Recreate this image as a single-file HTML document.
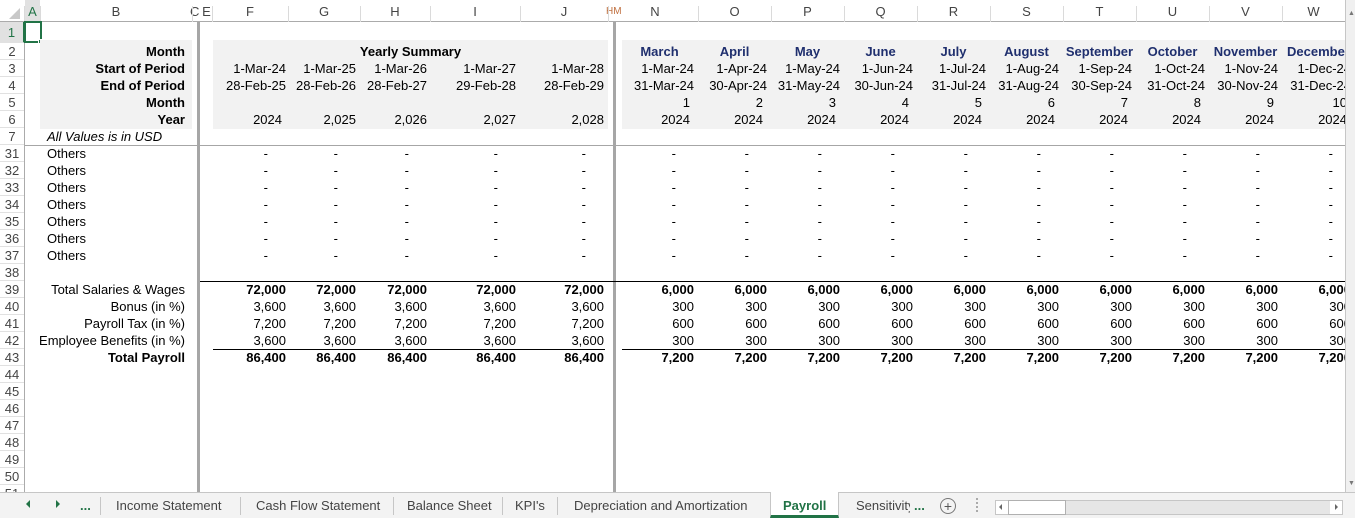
<!DOCTYPE html>
<html><head><meta charset="utf-8"><style>
*{margin:0;padding:0;box-sizing:border-box}
body{width:1355px;height:518px;overflow:hidden;background:#fff;font-family:"Liberation Sans",Arial,sans-serif;font-size:13px;color:#000;position:relative}
.a{position:absolute;white-space:nowrap}
.ch{position:absolute;top:0;height:22px;line-height:24px;color:#444;font-size:13px;text-align:center}
.cs{position:absolute;top:6px;width:1px;height:16px;background:#dadada}
.rh{position:absolute;left:0;width:24px;text-align:center;color:#444;height:17px;line-height:17px;border-bottom:1px solid #e1e1e1;font-size:13px}
.r{position:absolute;left:0;width:1345px;height:17px;line-height:17px;overflow:hidden}
.r span{position:absolute;top:0;white-space:nowrap;text-align:right}
.F{right:1059px}.G{right:989px}.H{right:918px}.I{right:829px}.J{right:741px}
.N{right:651px}.O{right:578px}.P{right:505px}.Q{right:432px}.R{right:359px}.S{right:286px}.T{right:213px}.U{right:140px}.V{right:67px}.W{right:-6px}
.d span{padding-right:18px}
.b{font-weight:bold}
.m{position:absolute;font-weight:bold;color:#1f2f6e;width:73px;text-align:center;top:43px;height:17px;line-height:17px}
.lab{position:absolute;left:0;width:185px;text-align:right;height:17px;line-height:17px;white-space:nowrap}
.tab{position:absolute;top:493px;height:25px;line-height:26px;color:#444;font-size:13px}
.sep{position:absolute;top:497px;width:1px;height:18px;background:#c6c6c6}
</style></head><body>
<div class="a" style="left:0;top:0;width:1347px;height:22px;background:#fff;border-bottom:1px solid #ababab"></div>
<div class="a" style="left:0;top:0;width:24px;height:22px;"><svg width="24" height="22"><polygon points="20,8 20,19 9,19" fill="#c8c8c8"/></svg></div>
<div class="ch" style="left:25px;width:15px;background:#e1e1e1;color:#217346;border-bottom:2px solid #217346;height:23px">A</div>
<div class="ch" style="left:40px;width:152px">B</div>
<div class="ch" style="left:190px;width:8px">C</div>
<div class="ch" style="left:201px;width:11px">E</div>
<div class="ch" style="left:212px;width:76px">F</div>
<div class="ch" style="left:288px;width:72px">G</div>
<div class="ch" style="left:360px;width:70px">H</div>
<div class="ch" style="left:430px;width:90px">I</div>
<div class="ch" style="left:520px;width:88px">J</div>
<div class="ch" style="left:606px;width:10px;font-size:10px;color:#c07040">HM</div>
<div class="ch" style="left:618px;width:74px">N</div>
<div class="ch" style="left:698px;width:73px">O</div>
<div class="ch" style="left:771px;width:73px">P</div>
<div class="ch" style="left:844px;width:73px">Q</div>
<div class="ch" style="left:917px;width:73px">R</div>
<div class="ch" style="left:990px;width:73px">S</div>
<div class="ch" style="left:1063px;width:73px">T</div>
<div class="ch" style="left:1136px;width:73px">U</div>
<div class="ch" style="left:1209px;width:73px">V</div>
<div class="ch" style="left:1282px;width:63px">W</div>
<div class="cs" style="left:24px"></div><div class="cs" style="left:40px"></div><div class="cs" style="left:192px"></div><div class="cs" style="left:212px"></div><div class="cs" style="left:288px"></div><div class="cs" style="left:360px"></div><div class="cs" style="left:430px"></div><div class="cs" style="left:520px"></div><div class="cs" style="left:608px"></div><div class="cs" style="left:698px"></div><div class="cs" style="left:771px"></div><div class="cs" style="left:844px"></div><div class="cs" style="left:917px"></div><div class="cs" style="left:990px"></div><div class="cs" style="left:1063px"></div><div class="cs" style="left:1136px"></div><div class="cs" style="left:1209px"></div><div class="cs" style="left:1282px"></div>
<div class="a" style="left:0;top:22px;width:25px;height:471px;border-right:1px solid #ababab"></div>
<div class="rh" style="top:22px;height:21px;line-height:21px;background:#e1e1e1;color:#217346;border-right:2px solid #217346;width:25px">1</div>
<div class="rh" style="top:43px">2</div><div class="rh" style="top:60px">3</div><div class="rh" style="top:77px">4</div><div class="rh" style="top:94px">5</div><div class="rh" style="top:111px">6</div><div class="rh" style="top:128px">7</div>
<div class="rh" style="top:145px">31</div><div class="rh" style="top:162px">32</div><div class="rh" style="top:179px">33</div><div class="rh" style="top:196px">34</div><div class="rh" style="top:213px">35</div><div class="rh" style="top:230px">36</div><div class="rh" style="top:247px">37</div><div class="rh" style="top:264px">38</div><div class="rh" style="top:281px">39</div><div class="rh" style="top:298px">40</div><div class="rh" style="top:315px">41</div><div class="rh" style="top:332px">42</div><div class="rh" style="top:349px">43</div><div class="rh" style="top:366px">44</div><div class="rh" style="top:383px">45</div><div class="rh" style="top:400px">46</div><div class="rh" style="top:417px">47</div><div class="rh" style="top:434px">48</div><div class="rh" style="top:451px">49</div><div class="rh" style="top:468px">50</div><div class="rh" style="top:485px;height:8px;overflow:hidden">51</div>
<div class="a" style="left:24px;top:21px;width:18px;height:22px;border:2px solid #217346"></div>
<div class="a" style="left:38px;top:39px;width:5px;height:5px;background:#217346;border:1px solid #fff"></div>
<div class="a" style="left:40px;top:40px;width:152px;height:89px;background:#f2f2f2"></div>
<div class="a" style="left:213px;top:40px;width:395px;height:89px;background:#f2f2f2"></div>
<div class="a" style="left:622px;top:40px;width:723px;height:89px;background:#f2f2f2"></div>
<div class="a" style="left:25px;top:145px;width:1320px;height:1px;background:#a6a6a6"></div>
<div class="a" style="left:197px;top:22px;width:3px;height:471px;background:#a6a6a6"></div>
<div class="a" style="left:613px;top:22px;width:3px;height:471px;background:#a6a6a6"></div>
<div class="lab b" style="top:43px">Month</div>
<div class="lab b" style="top:60px">Start of Period</div>
<div class="lab b" style="top:77px">End of Period</div>
<div class="lab b" style="top:94px">Month</div>
<div class="lab b" style="top:111px">Year</div>
<div class="a" style="left:47px;top:128px;line-height:17px;font-style:italic">All Values is in USD</div>
<div class="a" style="left:47px;top:145px;line-height:17px">Others</div>
<div class="a" style="left:47px;top:162px;line-height:17px">Others</div>
<div class="a" style="left:47px;top:179px;line-height:17px">Others</div>
<div class="a" style="left:47px;top:196px;line-height:17px">Others</div>
<div class="a" style="left:47px;top:213px;line-height:17px">Others</div>
<div class="a" style="left:47px;top:230px;line-height:17px">Others</div>
<div class="a" style="left:47px;top:247px;line-height:17px">Others</div>
<div class="lab" style="top:281px">Total Salaries &amp; Wages</div>
<div class="lab" style="top:298px">Bonus (in %)</div>
<div class="lab" style="top:315px">Payroll Tax (in %)</div>
<div class="lab" style="top:332px">Employee Benefits (in %)</div>
<div class="lab b" style="top:349px">Total Payroll</div>
<div class="a b" style="left:213px;width:395px;top:43px;line-height:17px;text-align:center">Yearly Summary</div>
<div class="m" style="left:623px">March</div><div class="m" style="left:698px">April</div><div class="m" style="left:771px">May</div><div class="m" style="left:844px">June</div><div class="m" style="left:917px">July</div><div class="m" style="left:990px">August</div><div class="m" style="left:1063px">September</div><div class="m" style="left:1136px">October</div><div class="m" style="left:1209px">November</div><div class="m" style="left:1282px;width:63px;overflow:hidden;text-align:left;padding-left:5px">December</div>
<div class="r" style="top:60px"><span class="F">1-Mar-24</span><span class="G">1-Mar-25</span><span class="H">1-Mar-26</span><span class="I">1-Mar-27</span><span class="J">1-Mar-28</span><span class="N">1-Mar-24</span><span class="O">1-Apr-24</span><span class="P">1-May-24</span><span class="Q">1-Jun-24</span><span class="R">1-Jul-24</span><span class="S">1-Aug-24</span><span class="T">1-Sep-24</span><span class="U">1-Oct-24</span><span class="V">1-Nov-24</span><span class="W">1-Dec-24</span></div>
<div class="r" style="top:77px"><span class="F">28-Feb-25</span><span class="G">28-Feb-26</span><span class="H">28-Feb-27</span><span class="I">29-Feb-28</span><span class="J">28-Feb-29</span><span class="N">31-Mar-24</span><span class="O">30-Apr-24</span><span class="P">31-May-24</span><span class="Q">30-Jun-24</span><span class="R">31-Jul-24</span><span class="S">31-Aug-24</span><span class="T">30-Sep-24</span><span class="U">31-Oct-24</span><span class="V">30-Nov-24</span><span class="W">31-Dec-24</span></div>
<div class="r" style="top:94px"><span style="right:655px">1</span><span style="right:582px">2</span><span style="right:509px">3</span><span style="right:436px">4</span><span style="right:363px">5</span><span style="right:290px">6</span><span style="right:217px">7</span><span style="right:144px">8</span><span style="right:71px">9</span><span style="right:-2px">10</span></div>
<div class="r" style="top:111px"><span style="right:1063px">2024</span><span class="G">2,025</span><span class="H">2,026</span><span class="I">2,027</span><span class="J">2,028</span><span style="right:655px">2024</span><span style="right:582px">2024</span><span style="right:509px">2024</span><span style="right:436px">2024</span><span style="right:363px">2024</span><span style="right:290px">2024</span><span style="right:217px">2024</span><span style="right:144px">2024</span><span style="right:71px">2024</span><span style="right:-2px">2024</span></div>
<div class="r d" style="top:145px"><span class="F">-</span><span class="G">-</span><span class="H">-</span><span class="I">-</span><span class="J">-</span><span class="N">-</span><span class="O">-</span><span class="P">-</span><span class="Q">-</span><span class="R">-</span><span class="S">-</span><span class="T">-</span><span class="U">-</span><span class="V">-</span><span class="W">-</span></div>
<div class="r d" style="top:162px"><span class="F">-</span><span class="G">-</span><span class="H">-</span><span class="I">-</span><span class="J">-</span><span class="N">-</span><span class="O">-</span><span class="P">-</span><span class="Q">-</span><span class="R">-</span><span class="S">-</span><span class="T">-</span><span class="U">-</span><span class="V">-</span><span class="W">-</span></div>
<div class="r d" style="top:179px"><span class="F">-</span><span class="G">-</span><span class="H">-</span><span class="I">-</span><span class="J">-</span><span class="N">-</span><span class="O">-</span><span class="P">-</span><span class="Q">-</span><span class="R">-</span><span class="S">-</span><span class="T">-</span><span class="U">-</span><span class="V">-</span><span class="W">-</span></div>
<div class="r d" style="top:196px"><span class="F">-</span><span class="G">-</span><span class="H">-</span><span class="I">-</span><span class="J">-</span><span class="N">-</span><span class="O">-</span><span class="P">-</span><span class="Q">-</span><span class="R">-</span><span class="S">-</span><span class="T">-</span><span class="U">-</span><span class="V">-</span><span class="W">-</span></div>
<div class="r d" style="top:213px"><span class="F">-</span><span class="G">-</span><span class="H">-</span><span class="I">-</span><span class="J">-</span><span class="N">-</span><span class="O">-</span><span class="P">-</span><span class="Q">-</span><span class="R">-</span><span class="S">-</span><span class="T">-</span><span class="U">-</span><span class="V">-</span><span class="W">-</span></div>
<div class="r d" style="top:230px"><span class="F">-</span><span class="G">-</span><span class="H">-</span><span class="I">-</span><span class="J">-</span><span class="N">-</span><span class="O">-</span><span class="P">-</span><span class="Q">-</span><span class="R">-</span><span class="S">-</span><span class="T">-</span><span class="U">-</span><span class="V">-</span><span class="W">-</span></div>
<div class="r d" style="top:247px"><span class="F">-</span><span class="G">-</span><span class="H">-</span><span class="I">-</span><span class="J">-</span><span class="N">-</span><span class="O">-</span><span class="P">-</span><span class="Q">-</span><span class="R">-</span><span class="S">-</span><span class="T">-</span><span class="U">-</span><span class="V">-</span><span class="W">-</span></div>
<div class="a" style="left:200px;top:281px;width:1145px;height:1px;background:#000"></div>
<div class="a" style="left:213px;top:349px;width:392px;height:1px;background:#000"></div>
<div class="a" style="left:622px;top:349px;width:723px;height:1px;background:#000"></div>
<div class="r b" style="top:281px"><span class="F">72,000</span><span class="G">72,000</span><span class="H">72,000</span><span class="I">72,000</span><span class="J">72,000</span><span class="N">6,000</span><span class="O">6,000</span><span class="P">6,000</span><span class="Q">6,000</span><span class="R">6,000</span><span class="S">6,000</span><span class="T">6,000</span><span class="U">6,000</span><span class="V">6,000</span><span class="W">6,000</span></div>
<div class="r" style="top:298px"><span class="F">3,600</span><span class="G">3,600</span><span class="H">3,600</span><span class="I">3,600</span><span class="J">3,600</span><span class="N">300</span><span class="O">300</span><span class="P">300</span><span class="Q">300</span><span class="R">300</span><span class="S">300</span><span class="T">300</span><span class="U">300</span><span class="V">300</span><span class="W">300</span></div>
<div class="r" style="top:315px"><span class="F">7,200</span><span class="G">7,200</span><span class="H">7,200</span><span class="I">7,200</span><span class="J">7,200</span><span class="N">600</span><span class="O">600</span><span class="P">600</span><span class="Q">600</span><span class="R">600</span><span class="S">600</span><span class="T">600</span><span class="U">600</span><span class="V">600</span><span class="W">600</span></div>
<div class="r" style="top:332px"><span class="F">3,600</span><span class="G">3,600</span><span class="H">3,600</span><span class="I">3,600</span><span class="J">3,600</span><span class="N">300</span><span class="O">300</span><span class="P">300</span><span class="Q">300</span><span class="R">300</span><span class="S">300</span><span class="T">300</span><span class="U">300</span><span class="V">300</span><span class="W">300</span></div>
<div class="r b" style="top:349px"><span class="F">86,400</span><span class="G">86,400</span><span class="H">86,400</span><span class="I">86,400</span><span class="J">86,400</span><span class="N">7,200</span><span class="O">7,200</span><span class="P">7,200</span><span class="Q">7,200</span><span class="R">7,200</span><span class="S">7,200</span><span class="T">7,200</span><span class="U">7,200</span><span class="V">7,200</span><span class="W">7,200</span></div>
<div class="a" style="left:1345px;top:0;width:10px;height:493px;background:#f0f0f0;border-left:1px solid #c6c6c6"></div>
<div class="a" style="left:1348px;top:10px;color:#777;font-size:7px">▲</div>
<div class="a" style="left:1348px;top:480px;color:#777;font-size:7px">▼</div>
<div class="a" style="left:0;top:492px;width:1355px;height:26px;background:#f3f3f3;border-top:1px solid #c6c6c6"></div>
<div class="a" style="left:26px;top:500px;width:0;height:0;border-top:4px solid transparent;border-bottom:4px solid transparent;border-right:4px solid #217346"></div>
<div class="a" style="left:56px;top:500px;width:0;height:0;border-top:4px solid transparent;border-bottom:4px solid transparent;border-left:4px solid #217346"></div>
<div class="tab b" style="left:80px;color:#217346">...</div>
<div class="sep" style="left:100px"></div>
<div class="tab" style="left:116px">Income Statement</div>
<div class="sep" style="left:240px"></div>
<div class="tab" style="left:256px">Cash Flow Statement</div>
<div class="sep" style="left:393px"></div>
<div class="tab" style="left:407px">Balance Sheet</div>
<div class="sep" style="left:502px"></div>
<div class="tab" style="left:515px">KPI's</div>
<div class="sep" style="left:557px"></div>
<div class="tab" style="left:574px">Depreciation and Amortization</div>
<div class="a" style="left:770px;top:492px;width:69px;height:26px;background:#fff;border-left:1px solid #c6c6c6;border-right:1px solid #c6c6c6;border-bottom:3px solid #217346"></div>
<div class="tab b" style="left:783px;color:#217346">Payroll</div>
<div class="tab" style="left:856px;width:54px;overflow:hidden">Sensitivity</div>
<div class="tab b" style="left:914px;color:#217346">...</div>
<div class="a" style="left:940px;top:498px;width:16px;height:16px;border:1px solid #777;border-radius:50%;text-align:center;line-height:14px;color:#555;font-size:14px">+</div>
<div class="a" style="left:976px;top:498px;width:2px;height:14px;border-left:2px dotted #aaa"></div>
<div class="a" style="left:995px;top:500px;width:348px;height:15px;background:#e6e6e6;border:1px solid #c6c6c6"></div>
<div class="a" style="left:1008px;top:500px;width:58px;height:15px;background:#fff;border:1px solid #b0b0b0"></div>
<div class="a" style="left:996px;top:501px;width:12px;height:13px;background:#fff"></div>
<div class="a" style="left:999px;top:504px;width:0;height:0;border-top:3px solid transparent;border-bottom:3px solid transparent;border-right:3px solid #666"></div>
<div class="a" style="left:1330px;top:501px;width:12px;height:13px;background:#fff"></div>
<div class="a" style="left:1335px;top:504px;width:0;height:0;border-top:3px solid transparent;border-bottom:3px solid transparent;border-left:3px solid #666"></div>
</body></html>
